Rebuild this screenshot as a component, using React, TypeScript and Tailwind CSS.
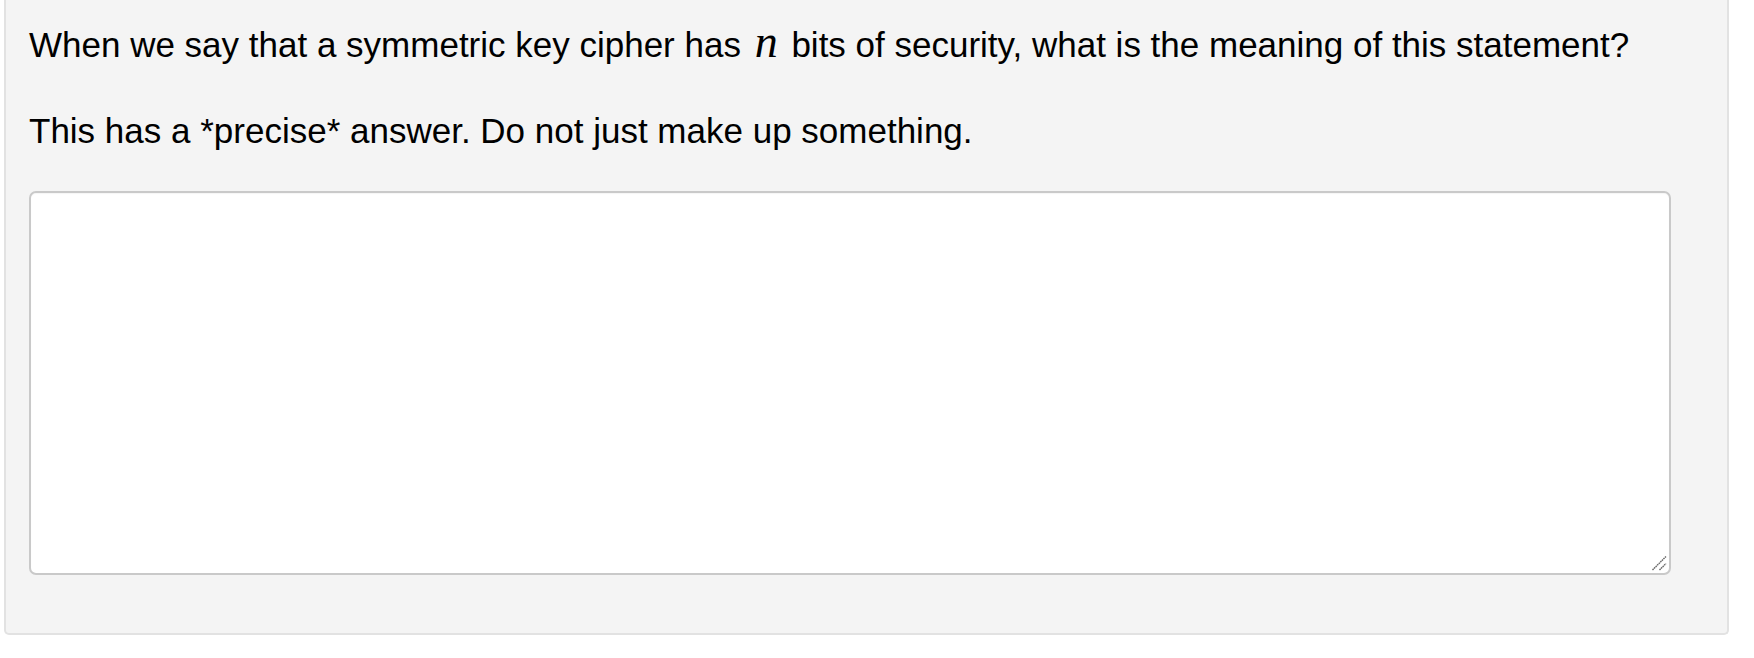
import React from "react";

export default function App() {
  return (
    <div className="min-h-[658px] w-[1754px] bg-white" style={{ fontFamily: '"Liberation Sans", Arial, Helvetica, sans-serif' }}>
      <div className="ml-[4px] w-[1725px] rounded-b-[5px] border-x-[2px] border-b-[2px] border-[#e2e2e2] bg-[#f4f4f4] pb-[58px] pl-[23px] pt-[23px]">
        <p className="text-[35px] leading-[43px] text-black">
          When we say that a symmetric key cipher has{" "}
          <span className="mx-[4px] text-[46px] italic leading-[10px]" style={{ fontFamily: '"Liberation Serif", "Times New Roman", serif' }}>
            n
          </span>{" "}
          bits of security, what is the meaning of this statement?
        </p>
        <p className="mt-[43px] text-[35px] leading-[43px] text-black">
          This has a *precise* answer. Do not just make up something.
        </p>
        <div className="relative mt-[39px] h-[384px] w-[1642px]">
          <textarea
            className="block h-full w-full resize-none rounded-[7px] border-[2px] border-[#c9c9c9] bg-white shadow-[inset_0_1px_1px_rgba(0,0,0,0.04)] outline-none"
            aria-label="answer"
          />
          <svg className="pointer-events-none absolute bottom-[3px] right-[3px]" width="18" height="18" viewBox="0 0 18 18">
            <line x1="2.5" y1="16" x2="16" y2="2.5" stroke="#666" strokeWidth="1.4" strokeDasharray="1.6 0.6" />
            <line x1="9.5" y1="16" x2="16" y2="9.5" stroke="#666" strokeWidth="1.4" strokeDasharray="1.6 0.6" />
          </svg>
        </div>
      </div>
    </div>
  );
}
